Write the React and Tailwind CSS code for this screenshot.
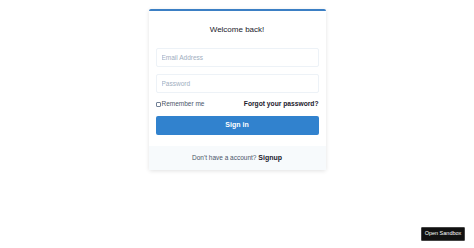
import React from 'react';

const font = { fontFamily: '"Liberation Sans", Arial, sans-serif' };

export default function App() {
  return (
    <div className="relative w-[474px] h-[248px] bg-white" style={font}>
      <div className="pt-[9px]">
        <div className="mx-auto w-[177px] bg-white border-t-2 border-[#3b7fc4] rounded-[2px] shadow-[0_1px_4px_rgba(0,0,0,0.12)]">
          <div className="px-[7px] pt-[14px] pb-[11px]">
            <h1 className="text-center text-[8px] leading-[10px] text-[#1a202c]">Welcome back!</h1>
            <input
              type="text"
              placeholder="Email Address"
              className="mt-[13px] block w-full h-[19px] px-[5px] text-[6.5px] border border-[#edf2f7] rounded-[2px] placeholder:text-[#a0aec0] outline-none"
            />
            <input
              type="password"
              placeholder="Password"
              className="mt-[7px] block w-full h-[19px] px-[5px] text-[6.5px] border border-[#edf2f7] rounded-[2px] placeholder:text-[#a0aec0] outline-none"
            />
            <div className="mt-[6px] flex items-center justify-between h-[10px]">
              <label className="flex items-center gap-[1px] text-[6.5px] text-[#4a5568]">
                <span className="inline-block w-[5px] h-[5px] border border-[#718096] rounded-[1px] bg-white" />
                Remember me
              </label>
              <a className="text-[6.7px] font-bold text-[#1a202c]">Forgot your password?</a>
            </div>
            <button className="mt-[7px] w-full h-[19px] bg-[#3182ce] rounded-[2px] text-white text-[7px] font-bold">
              Sign in
            </button>
          </div>
          <div className="h-[24px] bg-[#f7fafc] flex items-center justify-center text-[6.5px] text-[#4a5568]">
            Don't have a account?&nbsp;<span className="font-bold text-[#1a202c] text-[7px]">Signup</span>
          </div>
        </div>
      </div>
      <button className="absolute left-[421px] top-[227px] w-[44px] h-[14px] bg-[#111] rounded-[1px] border border-[#444] text-white text-[5.5px] leading-none">
        Open Sandbox
      </button>
    </div>
  );
}
